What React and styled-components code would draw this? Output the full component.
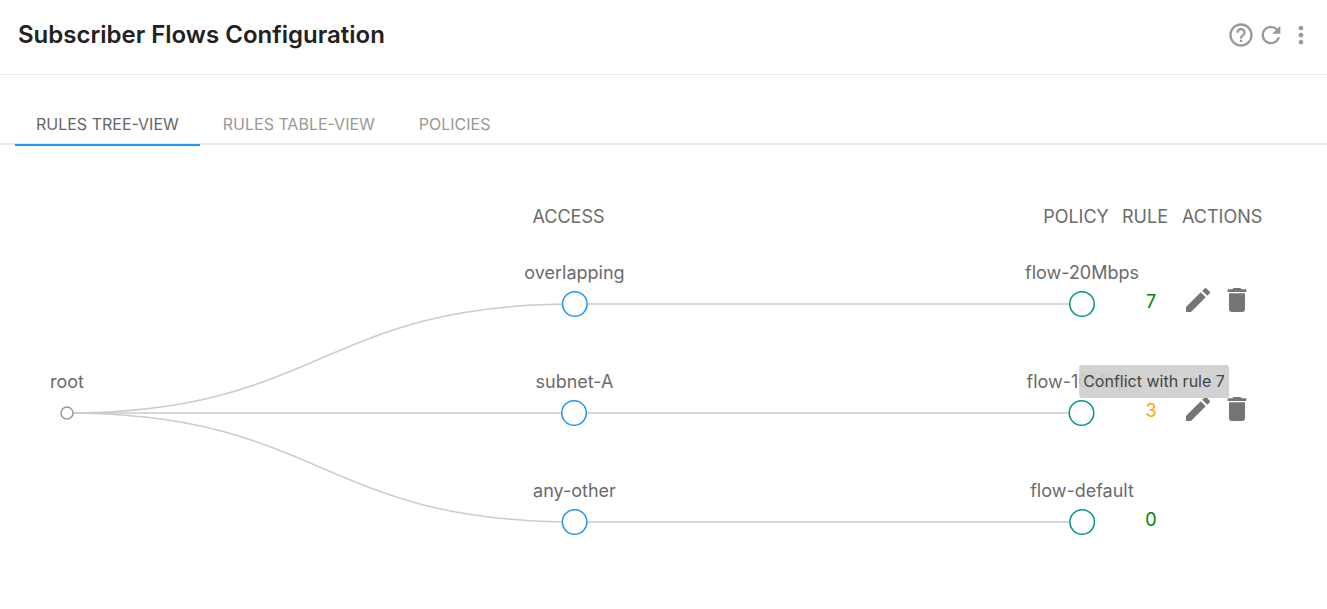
import React from 'react';
import styled, { createGlobalStyle } from 'styled-components';
import { MdHelpOutline, MdRefresh, MdMoreVert, MdEdit, MdDelete } from 'react-icons/md';

const GlobalStyle = createGlobalStyle`
  * {
    box-sizing: border-box;
  }
  body {
    margin: 0;
    background: #fff;
    color: #6b6b6b;
    font-family: Inter, "Liberation Sans", sans-serif;
  }
`

const Header = styled.header`
  display: flex;
  align-items: center;
  justify-content: space-between;
  min-height: 75px;
  padding: 0 12px 5px 18px;
  border-bottom: 1px solid #eaeaea;
`
const Title = styled.h1`
  margin: 0;
  color: #222;
  font-size: 24px;
  font-weight: 600;
  line-height: 34px;
`
const Toolbar = styled.div`
  display: flex;
  gap: 2px;
`
const IconButton = styled.button`
  display: flex;
  padding: 0;
  border: 0;
  background: none;
  color: ${props => props.$color || '#999'};
  font-size: ${props => props.$size || 28}px;
  cursor: pointer;
`

const Tabs = styled.div`
  display: flex;
  gap: 2px;
  margin-top: 28px;
  padding: 0 15px;
  border-bottom: 2px solid #ebebeb;
`
const Tab = styled.button`
  height: 43px;
  margin-bottom: -3px;
  padding: 0 21px;
  border: 0;
  border-bottom: 2px solid ${props => (props.$active ? '#2196f3' : 'transparent')};
  background: none;
  color: ${props => (props.$active ? '#666' : '#999')};
  font: inherit;
  font-size: 16px;
  cursor: pointer;
`

const Board = styled.main`
  display: flex;
  gap: 40px;
  padding: 56px 63px 24px 67px;
  font-size: 18px;
`
const Diagram = styled.div`
  position: relative;
  flex: 1;
  height: 376px;
`
const Links = styled.svg`
  display: block;
  width: 100%;
  height: 376px;

  path {
    fill: none;
    stroke: #ccc;
    stroke-width: 1.5;
    vector-effect: non-scaling-stroke;
  }
`
const Heading = styled.div`
  position: absolute;
  top: 0;
  left: calc(${props => props.$x}% - 6px);
  transform: translateX(-50%);
  line-height: 32px;
`
const Node = styled.div`
  position: absolute;
  top: ${props => props.$y - 43}px;
  left: ${props => props.$x}%;
  display: flex;
  flex-direction: column;
  align-items: center;
  transform: translateX(-50%);
  line-height: 24px;
  white-space: nowrap;
`
const Dot = styled.svg`
  width: 28px;
  height: 28px;
  margin-top: 5px;
  fill: #fff;
  stroke: ${props => props.$color};
  stroke-width: 1.5;
`

const Details = styled.table`
  align-self: flex-start;
  border-collapse: collapse;

  th {
    height: 46px;
    padding: 0;
    font-weight: 400;
    line-height: 32px;
    text-align: left;
    vertical-align: top;
  }
  th:first-child {
    width: 60px;
  }
  th:last-child {
    width: 82px;
  }
  td {
    height: 109px;
    padding: 0;
    text-align: center;
  }
  td:first-child {
    padding-right: 2px;
  }
`
const Rule = styled.span`
  position: relative;
  color: ${props => (props.$conflict ? 'orange' : 'green')};
`
const Tooltip = styled.span`
  position: absolute;
  bottom: 23px;
  left: 50%;
  z-index: 1;
  margin-left: 3px;
  padding: 0 4px;
  border-radius: 3px;
  background: rgba(207, 207, 207, 0.93);
  color: #444;
  font-size: 16px;
  line-height: 33px;
  white-space: nowrap;
  transform: translateX(-50%);
`
const Actions = styled.div`
  display: flex;
  gap: 7px;
  padding-bottom: 3px;
`

const ROOT_Y = 212;

const rows = [
  { access: 'overlapping', policy: 'flow-20Mbps', rule: 7, y: 103, editable: true },
  { access: 'subnet-A', policy: 'flow-10Mbps', rule: 3, y: 212, editable: true, conflict: 'Conflict with rule 7' },
  { access: 'any-other', policy: 'flow-default', rule: 0, y: 321 },
];

const tabs = ['RULES TREE-VIEW', 'RULES TABLE-VIEW', 'POLICIES'];

const TreeNode = ({ x, y, label, color, r = 12.25 }) => (
  <Node $x={x} $y={y}>
    <span>{label}</span>
    <Dot $color={color} viewBox="0 0 28 28">
      <circle cx="14" cy="14" r={r} />
    </Dot>
  </Node>
)

const Tree = () => (
  <Diagram>
    <Links viewBox="0 0 100 376" preserveAspectRatio="none">
      {rows.map(row => (
        <path key={row.access} d={`M0,${ROOT_Y}C25,${ROOT_Y} 25,${row.y} 50,${row.y}L100,${row.y}`} />
      ))}
    </Links>
    <Heading $x={50}>ACCESS</Heading>
    <Heading $x={100}>POLICY</Heading>
    <TreeNode x={0} y={ROOT_Y} label="root" color="#999" r={6} />
    {rows.map(row => (
      <React.Fragment key={row.access}>
        <TreeNode x={50} y={row.y} label={row.access} color="#2196f3" />
        <TreeNode x={100} y={row.y} label={row.policy} color="#009688" />
      </React.Fragment>
    ))}
  </Diagram>
)

const App = () => {
  const [active, setActive] = React.useState(tabs[0]);

  return (
    <>
      <GlobalStyle />
      <Header>
        <Title>Subscriber Flows Configuration</Title>
        <Toolbar>
          <IconButton aria-label="Help"><MdHelpOutline /></IconButton>
          <IconButton aria-label="Refresh"><MdRefresh /></IconButton>
          <IconButton aria-label="More"><MdMoreVert /></IconButton>
        </Toolbar>
      </Header>
      <Tabs role="tablist">
        {tabs.map(tab => (
          <Tab
            key={tab}
            role="tab"
            aria-selected={tab === active}
            $active={tab === active}
            onClick={() => setActive(tab)}
          >
            {tab}
          </Tab>
        ))}
      </Tabs>
      <Board>
        <Tree />
        <Details>
          <thead>
            <tr>
              <th>RULE</th>
              <th>ACTIONS</th>
            </tr>
          </thead>
          <tbody>
            {rows.map(row => (
              <tr key={row.rule}>
                <td>
                  <Rule $conflict={row.conflict}>
                    {row.rule}
                    {row.conflict && <Tooltip role="tooltip">{row.conflict}</Tooltip>}
                  </Rule>
                </td>
                <td>
                  {row.editable && (
                    <Actions>
                      <IconButton $size={32} $color="#757575" aria-label="Edit rule"><MdEdit /></IconButton>
                      <IconButton $size={32} $color="#757575" aria-label="Delete rule"><MdDelete /></IconButton>
                    </Actions>
                  )}
                </td>
              </tr>
            ))}
          </tbody>
        </Details>
      </Board>
    </>
  )
}

export default App;
